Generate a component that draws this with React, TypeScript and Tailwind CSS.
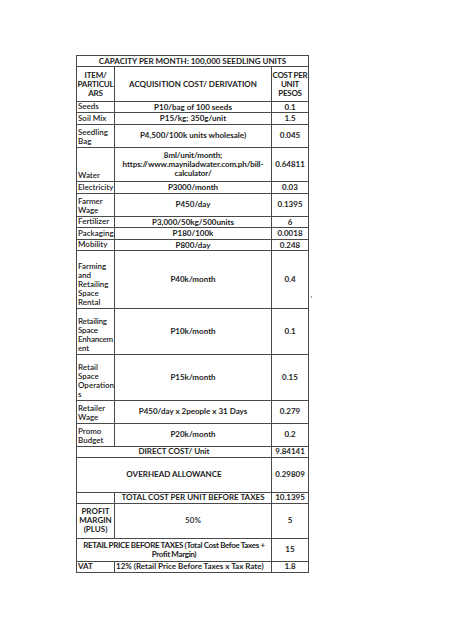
import React from 'react';

type Kind = 'head' | 'label' | 'mid' | 'val' | 'left' | 'labelBold';

interface Cell {
  lines: string[];
  cols?: 1 | 2 | 3;
  kind: Kind;
  extra?: string;
}

interface Row {
  span: 1 | 2 | 3 | 4 | 5;
  cells: Cell[];
}

const rowSpan = {
  1: 'row-span-1',
  2: 'row-span-2',
  3: 'row-span-3',
  4: 'row-span-4',
  5: 'row-span-5',
};

const colSpan = {
  1: 'col-span-1',
  2: 'col-span-2',
  3: 'col-span-3',
};

// flex-col: justify = vertical, items = horizontal
const kindClass: Record<Kind, string> = {
  head: 'justify-center items-center text-center font-bold',
  label: 'justify-end items-start text-left font-semibold pl-px pb-px',
  labelBold: 'justify-center items-start text-left font-bold pl-px',
  mid: 'justify-center items-center text-center font-bold',
  val: 'justify-center items-center text-center font-bold',
  left: 'justify-center items-start text-left font-bold pl-px',
};

const rows: Row[] = [
  { span: 1, cells: [{ lines: ['CAPACITY PER MONTH: 100,000 SEEDLING UNITS'], cols: 3, kind: 'head' }] },
  {
    span: 3,
    cells: [
      { lines: ['ITEM/', 'PARTICUL', 'ARS'], kind: 'head', extra: 'tracking-[-0.2px]' },
      { lines: ['ACQUISITION COST/ DERIVATION'], kind: 'head' },
      { lines: ['COST PER', 'UNIT', 'PESOS'], kind: 'head', extra: 'tracking-[-0.3px]' },
    ],
  },
  { span: 1, cells: [{ lines: ['Seeds'], kind: 'label' }, { lines: ['P10/bag of 100 seeds'], kind: 'mid' }, { lines: ['0.1'], kind: 'val' }] },
  { span: 1, cells: [{ lines: ['Soil Mix'], kind: 'label' }, { lines: ['P15/kg; 350g/unit'], kind: 'mid' }, { lines: ['1.5'], kind: 'val' }] },
  { span: 2, cells: [{ lines: ['Seedling', 'Bag'], kind: 'label' }, { lines: ['P4,500/100k units wholesale)'], kind: 'mid' }, { lines: ['0.045'], kind: 'val' }] },
  {
    span: 3,
    cells: [
      { lines: ['Water'], kind: 'label' },
      { lines: ['8ml/unit/month;', 'https://www.mayniladwater.com.ph/bill-', 'calculator/'], kind: 'mid', extra: 'tracking-[-0.1px]' },
      { lines: ['0.64811'], kind: 'val' },
    ],
  },
  { span: 1, cells: [{ lines: ['Electricity'], kind: 'label' }, { lines: ['P3000/month'], kind: 'mid' }, { lines: ['0.03'], kind: 'val' }] },
  { span: 2, cells: [{ lines: ['Farmer', 'Wage'], kind: 'label' }, { lines: ['P450/day'], kind: 'mid' }, { lines: ['0.1395'], kind: 'val' }] },
  { span: 1, cells: [{ lines: ['Fertilizer'], kind: 'label' }, { lines: ['P3,000/50kg/500units'], kind: 'mid' }, { lines: ['6'], kind: 'val' }] },
  { span: 1, cells: [{ lines: ['Packaging'], kind: 'label' }, { lines: ['P180/100k'], kind: 'mid' }, { lines: ['0.0018'], kind: 'val' }] },
  { span: 1, cells: [{ lines: ['Mobility'], kind: 'label' }, { lines: ['P800/day'], kind: 'mid' }, { lines: ['0.248'], kind: 'val' }] },
  {
    span: 5,
    cells: [
      { lines: ['Farming', 'and', 'Retailing', 'Space', 'Rental'], kind: 'label' },
      { lines: ['P40k/month'], kind: 'mid' },
      { lines: ['0.4'], kind: 'val' },
    ],
  },
  {
    span: 4,
    cells: [
      { lines: ['Retailing', 'Space', 'Enhancem', 'ent'], kind: 'label', extra: 'tracking-[-0.2px]' },
      { lines: ['P10k/month'], kind: 'mid' },
      { lines: ['0.1'], kind: 'val' },
    ],
  },
  {
    span: 4,
    cells: [
      { lines: ['Retail', 'Space', 'Operation', 's'], kind: 'label' },
      { lines: ['P15k/month'], kind: 'mid' },
      { lines: ['0.15'], kind: 'val' },
    ],
  },
  { span: 2, cells: [{ lines: ['Retailer', 'Wage'], kind: 'label' }, { lines: ['P450/day x 2people x 31 Days'], kind: 'mid' }, { lines: ['0.279'], kind: 'val' }] },
  { span: 2, cells: [{ lines: ['Promo', 'Budget'], kind: 'label' }, { lines: ['P20k/month'], kind: 'mid' }, { lines: ['0.2'], kind: 'val' }] },
  { span: 1, cells: [{ lines: ['DIRECT COST/ Unit'], cols: 2, kind: 'head' }, { lines: ['9.84141'], kind: 'head' }] },
  { span: 3, cells: [{ lines: ['OVERHEAD ALLOWANCE'], cols: 2, kind: 'head' }, { lines: ['0.29809'], kind: 'head' }] },
  {
    span: 1,
    cells: [
      { lines: [''], kind: 'label' },
      { lines: ['TOTAL COST PER UNIT BEFORE TAXES'], kind: 'head' },
      { lines: ['10.1395'], kind: 'head' },
    ],
  },
  {
    span: 3,
    cells: [
      { lines: ['PROFIT', 'MARGIN', '(PLUS)'], kind: 'head' },
      { lines: ['50%'], kind: 'mid', extra: 'font-semibold' },
      { lines: ['5'], kind: 'head' },
    ],
  },
  {
    span: 2,
    cells: [
      { lines: ['RETAIL PRICE BEFORE TAXES (Total Cost Befoe Taxes +', 'Profit Margin)'], cols: 2, kind: 'head', extra: 'tracking-[-0.35px]' },
      { lines: ['15'], kind: 'head' },
    ],
  },
  {
    span: 1,
    cells: [
      { lines: ['VAT'], kind: 'labelBold' },
      { lines: ['12% (Retail Price Before Taxes x Tax Rate)'], kind: 'left' },
      { lines: ['1.8'], kind: 'head' },
    ],
  },
];

export default function App() {
  return (
    <div className="relative w-full h-[632px] bg-white pt-[55px] pl-[76px] font-['Lato','Open_Sans',sans-serif] text-[#1c1c1c]">
      <div className="grid w-[233px] h-[518px] grid-cols-[37px_156px_36px] grid-rows-[repeat(45,minmax(0,1fr))] gap-px bg-[#4a4a4a] p-px text-[8px] leading-[9px]">
        {rows.map((row, ri) =>
          row.cells.map((cell, ci) => (
            <div
              key={`${ri}-${ci}`}
              className={`flex flex-col overflow-hidden bg-white ${rowSpan[row.span]} ${colSpan[cell.cols ?? 1]} ${kindClass[cell.kind]} ${cell.extra ?? ''}`}
            >
              <div>
                {cell.lines.map((l, li) => (
                  <div key={li} className="whitespace-nowrap">
                    {l}
                  </div>
                ))}
              </div>
            </div>
          ))
        )}
      </div>
      <span className="absolute left-[311px] top-[296px] h-[2px] w-px bg-[#9a9a9a]" />
    </div>
  );
}
